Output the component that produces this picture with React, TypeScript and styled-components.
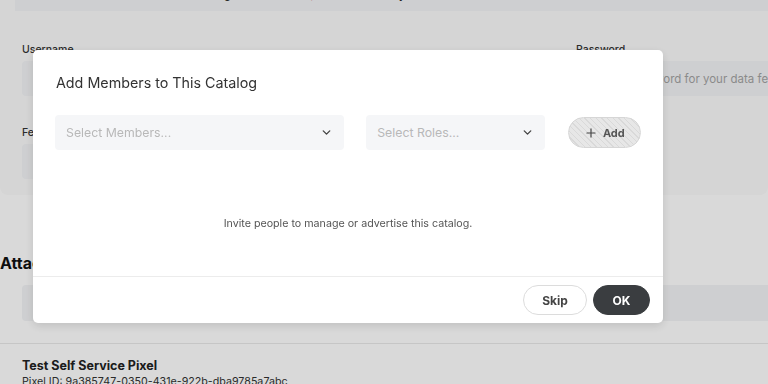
import React from "react";
import styled, { createGlobalStyle } from "styled-components";
import { FiChevronDown, FiPlus } from "react-icons/fi";

const GlobalStyle = createGlobalStyle`
  html, body {
    margin: 0;
    padding: 0;
  }
  body {
    width: 768px;
    height: 384px;
    overflow: hidden;
    background: #ffffff;
    font-family: Inter, "Open Sans", sans-serif;
    color: #222;
  }
`;

// background page (dimmed by the overlay)
const Page = styled.main`
  display: flex;
  flex-direction: column;
`;

const SettingsCard = styled.section`
  background: #fbfbfb;
  border-radius: 0 0 8px 8px;
  padding: 0 0 16px 22px;
  display: flex;
  flex-direction: column;
  overflow: hidden;
`;

const Notice = styled.div`
  height: 11px;
  margin-left: -7px;
  padding-left: 24px;
  background: #f3f4f6;
  overflow: hidden;
  font-size: 12px;
  line-height: 12px;
  color: #222;

  span {
    display: block;
    margin-top: -12px;
    white-space: nowrap;
  }
  em {
    font-style: normal;
    color: #c0392b;
  }
`;

const FieldGrid = styled.div`
  display: grid;
  grid-template-columns: 532px 532px;
  column-gap: 22px;
  row-gap: 30px;
  margin-top: 32px;
`;

const Field = styled.div`
  display: flex;
  flex-direction: column;
  gap: 5px;
`;

const Label = styled.label`
  font-size: 10.5px;
  line-height: 13px;
  font-weight: 500;
  color: #333;
`;

const Input = styled.div`
  height: 35px;
  background: #f3f4f6;
  border-radius: 4px;
  display: flex;
  align-items: center;
  padding: 0 11px;
  font-size: 11.5px;
  color: #a3a3a3;
  white-space: nowrap;
`;

const SectionTitle = styled.h2`
  margin: 58px 0 0;
  font-size: 16px;
  line-height: 20px;
  font-weight: 700;
  color: #111;
`;

const SearchBox = styled.div`
  margin: 12px 0 0 22px;
  height: 36px;
  background: #f3f4f6;
  border-radius: 4px 0 0 4px;
`;

const Divider = styled.hr`
  margin: 22px 0 0;
  border: none;
  border-top: 1px solid #e9e9e9;
`;

const PixelRow = styled.div`
  padding: 14px 22px 0;
  display: flex;
  flex-direction: column;
  gap: 1px;
`;

const PixelName = styled.div`
  font-size: 12.5px;
  line-height: 16px;
  font-weight: 700;
  color: #222;
`;

const PixelId = styled.div`
  font-size: 10.7px;
  line-height: 14px;
  color: #333;
`;

// modal
const Overlay = styled.div`
  position: fixed;
  inset: 0;
  background: rgba(0, 0, 0, 0.15);
`;

const Modal = styled.div`
  position: fixed;
  top: 50px;
  left: 33px;
  width: 630px;
  height: 273px;
  background: #fff;
  border-radius: 5px;
  box-shadow: 0 3px 10px rgba(0, 0, 0, 0.12);
  display: flex;
  flex-direction: column;
`;

const ModalTitle = styled.h3`
  margin: 0;
  padding: 23px 23px 0;
  font-size: 14.3px;
  line-height: 20px;
  font-weight: 400;
  color: #333;
`;

const Controls = styled.div`
  display: flex;
  align-items: center;
  padding: 0 22px;
  margin-top: 22px;
`;

const Select = styled.div<{ $width: number }>`
  width: ${(p) => p.$width}px;
  height: 35px;
  box-sizing: border-box;
  margin-right: 22px;
  padding: 0 11px;
  background: #f5f6f8;
  border-radius: 4px;
  display: flex;
  align-items: center;
  justify-content: space-between;
  font-size: 12.3px;
  color: #b8b8b8;

  svg {
    color: #444;
    stroke-width: 2.5;
  }
`;

const AddButton = styled.button`
  margin-left: 1px;
  width: 74px;
  height: 31px;
  border: 1px solid #d6d6d6;
  border-radius: 16px;
  background: repeating-linear-gradient(45deg, #e7e7e7 0 3px, #d9d9d9 3px 4px);
  display: flex;
  align-items: center;
  justify-content: center;
  gap: 5px;
  font-family: inherit;
  font-size: 11px;
  font-weight: 700;
  color: #555;

  svg {
    color: #444;
    stroke-width: 2;
  }
`;

const ModalBody = styled.div`
  flex: 1;
  padding-top: 67px;
  text-align: center;
  font-size: 10.7px;
  line-height: 14px;
  color: #555;
`;

const ModalFooter = styled.div`
  border-top: 1px solid #ececec;
  padding: 8px 13px 8px;
  display: flex;
  justify-content: flex-end;
  gap: 6px;
`;

const FooterButton = styled.button<{ $primary?: boolean }>`
  height: 30px;
  width: ${(p) => (p.$primary ? 57 : 64)}px;
  border-radius: 15px;
  border: 1px solid ${(p) => (p.$primary ? "#3a3d40" : "#dcdcdc")};
  background: ${(p) => (p.$primary ? "#3a3d40" : "#fff")};
  color: ${(p) => (p.$primary ? "#fff" : "#444")};
  font-family: inherit;
  font-size: 12px;
  font-weight: 700;
`;

export default function App() {
  return (
    <>
      <GlobalStyle />
      <Page>
        <SettingsCard>
          <Notice>
            <span>
              Paste the feed link and the settings below. Your <em>password</em> is only stored for
              scheduled fetches of this data feed.
            </span>
          </Notice>
          <FieldGrid>
            <Field>
              <Label>Username</Label>
              <Input />
            </Field>
            <Field>
              <Label>Password</Label>
              <Input>Enter a password for your data feed</Input>
            </Field>
            <Field>
              <Label>Feed Schedule</Label>
              <Input />
            </Field>
          </FieldGrid>
        </SettingsCard>

        <SectionTitle>Attached Pixels</SectionTitle>
        <SearchBox />
        <Divider />
        <PixelRow>
          <PixelName>Test Self Service Pixel</PixelName>
          <PixelId>Pixel ID: 9a385747-0350-431e-922b-dba9785a7abc</PixelId>
        </PixelRow>
      </Page>

      <Overlay />
      <Modal>
        <ModalTitle>Add Members to This Catalog</ModalTitle>
        <Controls>
          <Select $width={292}>
            Select Members...
            <FiChevronDown size={13} />
          </Select>
          <Select $width={180}>
            Select Roles...
            <FiChevronDown size={13} />
          </Select>
          <AddButton>
            <FiPlus size={14} />
            Add
          </AddButton>
        </Controls>
        <ModalBody>Invite people to manage or advertise this catalog.</ModalBody>
        <ModalFooter>
          <FooterButton>Skip</FooterButton>
          <FooterButton $primary>OK</FooterButton>
        </ModalFooter>
      </Modal>
    </>
  );
}
